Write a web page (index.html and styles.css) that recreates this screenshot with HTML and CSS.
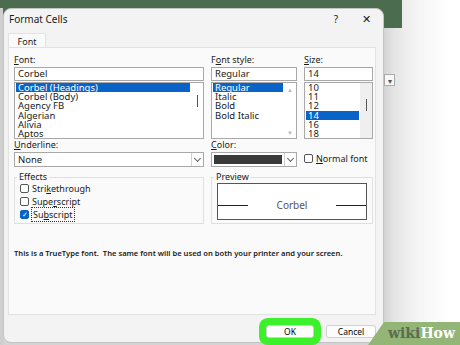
FILE: index.html
```html
<!DOCTYPE html>
<html lang="en">

<head>
    <meta charset="UTF-8">
    <meta name="viewport" content="width=device-width, initial-scale=1.0">
    <title>Format Cells</title>
    <link rel="stylesheet" href="styles.css">
</head>

<body>
    <div class="desktop">
        <div class="edge"></div>

        <div class="dialog">
            <div class="titlebar">
                <span class="title">Format Cells</span>
                <span class="help">?</span>
                <span class="close">&#x2715;</span>
            </div>

            <div class="tabs">
                <span class="tab">Font</span>
            </div>

            <div class="panel">
                <div class="fields">
                    <!-- font name -->
                    <div class="col">
                        <label class="lbl"><u>F</u>ont:</label>
                        <div class="textbox">Corbel</div>
                        <div class="listbox">
                            <div class="items">
                                <div class="item selected">Corbel (Headings)</div>
                                <div class="item">Corbel (Body)</div>
                                <div class="item">Agency FB</div>
                                <div class="item">Algerian</div>
                                <div class="item">Alivia</div>
                                <div class="item">Aptos</div>
                            </div>
                            <div class="scroll"><span class="thumb"></span></div>
                        </div>
                    </div>

                    <!-- font style -->
                    <div class="col">
                        <label class="lbl">F<u>o</u>nt style:</label>
                        <div class="textbox">Regular</div>
                        <div class="listbox">
                            <div class="items">
                                <div class="item selected">Regular</div>
                                <div class="item">Italic</div>
                                <div class="item">Bold</div>
                                <div class="item">Bold Italic</div>
                            </div>
                            <div class="scroll arrows">
                                <span class="arrow">&#x25B2;</span>
                                <span class="arrow">&#x25BC;</span>
                            </div>
                        </div>
                    </div>

                    <!-- size -->
                    <div class="col">
                        <label class="lbl"><u>S</u>ize:</label>
                        <div class="textbox">14</div>
                        <div class="listbox">
                            <div class="items">
                                <div class="item">10</div>
                                <div class="item">11</div>
                                <div class="item">12</div>
                                <div class="item selected">14</div>
                                <div class="item">16</div>
                                <div class="item">18</div>
                            </div>
                            <div class="scroll grey"><span class="thumb low"></span></div>
                        </div>
                    </div>

                    <div class="col">
                        <label class="lbl"><u>U</u>nderline:</label>
                        <div class="select">
                            <span class="value">None</span>
                            <span class="chev"></span>
                        </div>
                    </div>

                    <div class="col">
                        <label class="lbl"><u>C</u>olor:</label>
                        <div class="select">
                            <span class="swatch"></span>
                            <span class="chev"></span>
                        </div>
                    </div>

                    <div class="col normal">
                        <label class="check"><span class="box"></span><span><u>N</u>ormal font</span></label>
                    </div>

                    <fieldset class="group effects">
                        <legend>Effects</legend>
                        <label class="check"><span class="box"></span><span>Stri<u>k</u>ethrough</span></label>
                        <label class="check"><span class="box"></span><span>Supe<u>r</u>script</span></label>
                        <label class="check"><span class="box on">&#x2713;</span><span class="focus">Su<u>b</u>script</span></label>
                    </fieldset>

                    <fieldset class="group preview">
                        <legend>Preview</legend>
                        <div class="sample">
                            <span class="rule"></span>
                            <span class="word">Corbel</span>
                            <span class="rule"></span>
                        </div>
                    </fieldset>
                </div>

                <p class="note">This is a TrueType font.&nbsp; The same font will be used on both your printer and your screen.</p>
            </div>

            <div class="footer">
                <button class="btn ok">OK</button>
                <button class="btn cancel">Cancel</button>
            </div>
        </div>

        <div class="beside">
            <span class="dropbtn">&#x25BE;</span>
        </div>

        <div class="logo"><span class="wiki">wiki</span>How</div>
    </div>
</body>

</html>
```

FILE: styles.css
```css
* {
    box-sizing: border-box;
}

body {
    margin: 0;
    font-family: "Noto Sans", "Open Sans", sans-serif;
    color: #1a1a1a;
}

.desktop {
    position: relative;
    display: flex;
    width: 460px;
    height: 345px;
    overflow: hidden;
    background:
        linear-gradient(#4b6c4e, #4b6c4e) 0 0 / 402px 28px no-repeat,
        linear-gradient(90deg, #d4d4d4 384px, #e6e6e6 395px, #f6f6f6 420px, #fff 450px);
}

.edge {
    width: 3px;
    margin-top: 8px;
    background: #cfcfcf;
}

/* dialog window */
.dialog {
    display: flex;
    flex-direction: column;
    width: 381px;
    height: 335px;
    margin-top: 8px;
    background: #f3f3f3;
    border: 1px solid #c4c4c4;
    border-radius: 8px 8px 0 8px;
}

.titlebar {
    display: flex;
    align-items: center;
    height: 19px;
    padding: 0 12px 0 5px;
    font-size: 10px;
}

.title {
    flex: 1;
}

.help {
    margin-right: 24px;
    font-size: 10px;
}

.close {
    font-size: 11px;
}

.tabs {
    display: flex;
    padding: 5px 0 0 4px;
}

.tab {
    width: 38px;
    height: 15px;
    margin-bottom: -1px;
    padding-top: 1px;
    text-align: center;
    font-size: 9px;
    background: #fafafa;
    border: 1px solid #e2e2e2;
    border-bottom: none;
}

.panel {
    height: 268px;
    margin: 0 7px 0 4px;
    padding: 6px 2px 0 5px;
    background: #fafafa;
    border: 1px solid #e2e2e2;
}

.fields {
    display: grid;
    grid-template-columns: 190px 86px 69px;
    column-gap: 7px;
}

.lbl {
    display: block;
    height: 12px;
    font-size: 9px;
    line-height: 12px;
}

.textbox {
    height: 14px;
    margin-top: 1px;
    padding-left: 3px;
    font-size: 9.5px;
    line-height: 12px;
    background: #fff;
    border: 1px solid #a8a8a8;
}

.listbox {
    display: flex;
    height: 57px;
    margin-top: 1px;
    background: #fff;
    border: 1px solid #a8a8a8;
}

.items {
    flex: 1;
    padding: 0 1px;
}

.item {
    height: 9.2px;
    padding-left: 2px;
    font-size: 9.5px;
    line-height: 9.2px;
}

.item.selected {
    background: #0a64c8;
    color: #fff;
}

.scroll {
    display: flex;
    justify-content: center;
    width: 12px;
    padding-top: 12px;
}

.scroll.grey {
    background: #efefef;
    padding-top: 16px;
}

.thumb {
    width: 1px;
    height: 12px;
    background: #555;
}

.scroll.arrows {
    flex-direction: column;
    justify-content: space-between;
    align-items: center;
    padding: 3px 0 1px;
    font-size: 6px;
    color: #b8b8b8;
}

.select {
    display: flex;
    align-items: center;
    height: 15px;
    margin-top: 1px;
    background: #fff;
    border: 1px solid #a8a8a8;
}

.value {
    flex: 1;
    padding-left: 3px;
    font-size: 9.5px;
}

.swatch {
    flex: 1;
    height: 9px;
    margin: 0 2px;
    background: #3a3a3a;
}

.chev {
    width: 12px;
    height: 100%;
    border-left: 1px solid #d0d0d0;
    position: relative;
}

.chev::after {
    content: "";
    position: absolute;
    left: 3px;
    top: 3px;
    width: 4px;
    height: 4px;
    border-right: 1px solid #666;
    border-bottom: 1px solid #666;
    transform: rotate(45deg);
}

.normal {
    padding-top: 13px;
}

.check {
    display: flex;
    align-items: center;
    gap: 3px;
    height: 13px;
    font-size: 9px;
}

.box {
    width: 9px;
    height: 9px;
    border: 1px solid #555;
    border-radius: 2px;
    background: #fff;
}

.box.on {
    background: #0a64c8;
    border-color: #0a64c8;
    color: #fff;
    font-size: 7px;
    line-height: 7px;
    text-align: center;
}

.focus {
    outline: 1px dotted #333;
    padding: 0 1px;
}

.group {
    height: 51px;
    margin: 6px 0 0;
    padding: 0 5px;
    border: 1px solid #e0e0e0;
}

.group legend {
    padding: 0 2px;
    margin-left: -3px;
    font-size: 9px;
    line-height: 8px;
}

.effects {
    padding-left: 5px;
    padding-top: 1px;
}

.preview {
    grid-column: span 2;
    width: 162px;
}

.sample {
    display: flex;
    align-items: center;
    height: 37px;
    margin-top: 2px;
    padding-top: 8px;
    background: #fff;
    border: 1px solid #555;
}

.rule {
    width: 30px;
    height: 1px;
    background: #222;
}

.word {
    flex: 1;
    text-align: center;
    font-size: 10px;
    line-height: 10px;
    margin-top: -2px;
    color: #555;
}

.note {
    margin: 24px 0 0;
    font-size: 7.6px;
    font-weight: 600;
}

.footer {
    display: flex;
    justify-content: flex-end;
    gap: 12px;
    padding: 10px 7px 0;
}

.btn {
    width: 48px;
    height: 13px;
    padding: 0;
    font-family: inherit;
    font-size: 8.5px;
    line-height: 11px;
    background: #fdfdfd;
    border: 1px solid #d0d0d0;
    border-radius: 3px;
}

.btn.cancel {
    width: 50px;
}

.btn.ok {
    box-shadow: 0 0 0 7px #3cf02a;
}

.beside {
    flex: 1;
    padding-top: 74px;
}

.dropbtn {
    display: block;
    width: 11px;
    height: 12px;
    font-size: 8px;
    line-height: 11px;
    text-align: center;
    color: #555;
    background: #f7f7f7;
    border: 1px solid #aaa;
}

/* watermark */
.logo {
    position: absolute;
    right: 0;
    bottom: 0;
    width: 92px;
    height: 23px;
    padding: 3px 0 0 20px;
    font-family: "DejaVu Serif", serif;
    font-weight: bold;
    font-size: 14px;
    color: #fff;
    background: #93b676;
    clip-path: polygon(16px 0, 100% 0, 100% 100%, 0 100%);
}

.wiki {
    color: #5d6b52;
}
```
